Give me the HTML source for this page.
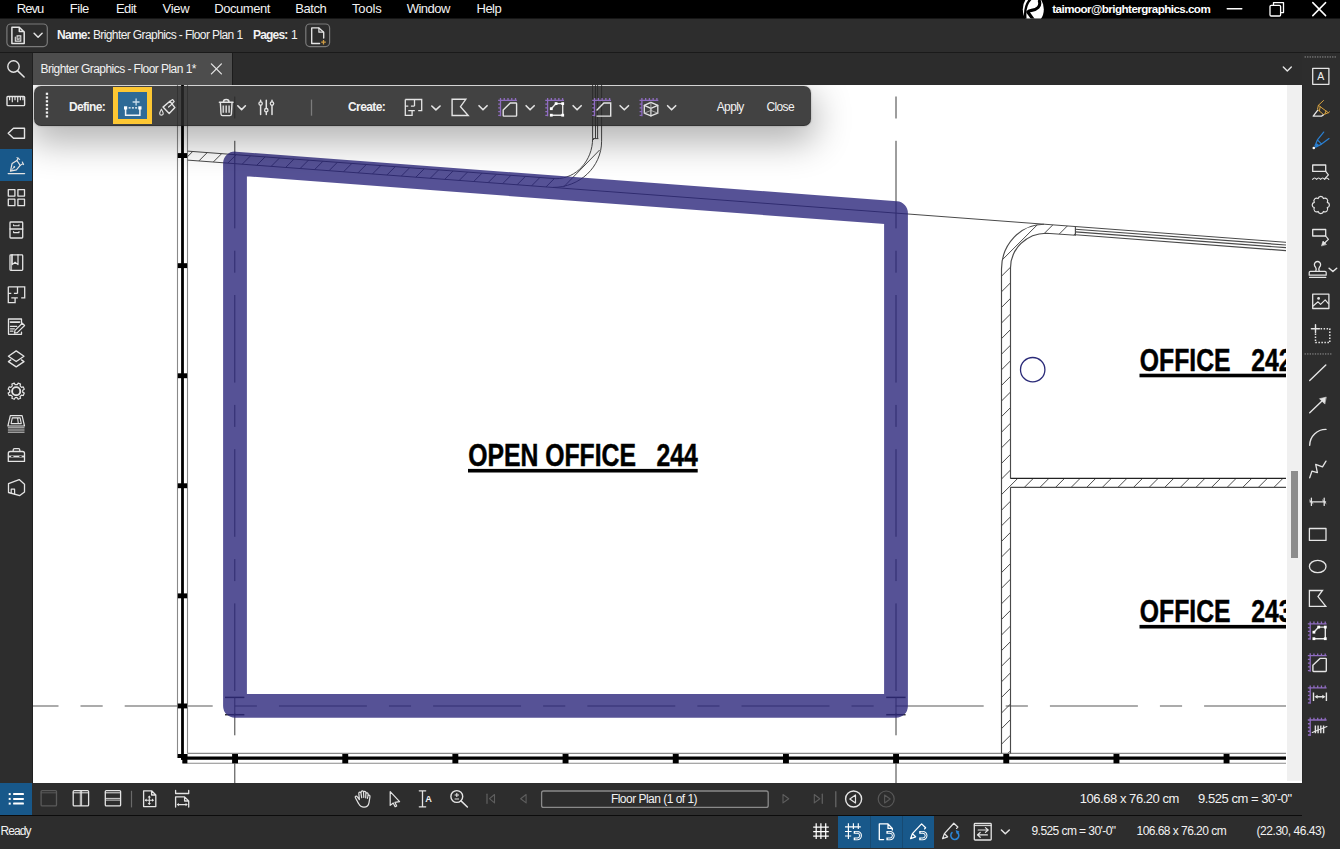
<!DOCTYPE html>
<html lang="en">
<head>
<meta charset="utf-8">
<title>Bluebeam Revu - Brighter Graphics - Floor Plan 1</title>
<style>
html,body{margin:0;padding:0;background:#2d2d2d;}
body{width:1340px;height:849px;overflow:hidden;font-family:"Liberation Sans","DejaVu Sans",sans-serif;}
#app{position:relative;width:1340px;height:849px;overflow:hidden;background:#2d2d2d;}
.abs{position:absolute;}
.t{position:absolute;white-space:pre;margin:0;padding:0;}
#menubar{left:0;top:0;width:1340px;height:18px;background:#000;}
#namebar{left:0;top:18px;width:1340px;height:34px;background:#2d2d2d;}
#nameline{left:0;top:52px;width:1340px;height:1px;background:#1a1a1a;}
#menuedge{left:0;top:18px;width:1340px;height:1px;background:#161616;}
#tabbar{left:33px;top:53px;width:1269px;height:32px;background:#2c2c2c;}
#tab{left:33px;top:53px;width:199px;height:32px;background:#4d4d4d;border-right:1px solid #1c1c1c;}
#leftbar{left:0;top:53px;width:33px;height:730px;background:#2d2d2d;}
#rightbar{left:1302px;top:53px;width:38px;height:763px;background:#2d2d2d;}
#canvas{left:33px;top:85px;width:1269px;height:698px;background:#fff;overflow:hidden;}
#vscroll{left:1287px;top:85px;width:15px;height:696px;background:#f0f0f0;}
#vthumb{left:1291px;top:471px;width:7px;height:87px;background:#8c8c8c;}
#bottombar{left:0;top:783px;width:1302px;height:32px;background:#2d2d2d;}
#bottomline{left:0;top:815px;width:1302px;height:1px;background:#0c0c0c;}
#statusbar{left:0;top:816px;width:1340px;height:33px;background:#2d2d2d;}
#floatbar{left:1px;top:1px;width:777px;height:40px;border-radius:7px;background:rgba(39,39,39,0.875);box-shadow:0 12px 36px 4px rgba(0,0,0,0.31), 0 0 2px 0 rgba(0,0,0,0.3), inset 0 -1px 0 rgba(0,0,0,0.22);}
#leftedge{left:32px;top:53px;width:1px;height:730px;background:#202020;}
#rightedge{left:1302px;top:85px;width:1px;height:698px;background:#272727;}
#leftactive{left:0;top:149px;width:32px;height:32.4px;background:#18588a;}
#listactive{left:0;top:783px;width:32.4px;height:32px;background:#18588a;}
#snapactive{left:837.8px;top:816px;width:96.2px;height:32px;background:#18588a;}
.snapsep{top:816px;width:1px;height:32px;background:#174a72;}
#hilite{left:112.9px;top:87.1px;width:29px;height:27.4px;border:5.2px solid #fdc733;background:#2e6a96;}
svg{position:absolute;overflow:visible;}
</style>
</head>

<body>
<div id="app">
<!-- drawing canvas -->
<div class="abs" id="canvas">
<svg width="1253" height="698" viewBox="33 85 1253 698" style="left:0;top:0;overflow:hidden">
<defs>
<clipPath id="clipBand"><path d="M187.5,151.1 L556,178.7 C576.2,178.7 592.6,160.7 592.6,138.6 L601.6,138.6 L601.6,141.2 C601.6,166.9 579.8,187.4 553,187.4 L187.5,160.1 Z"/></clipPath>
<clipPath id="clipWall"><path d="M1001.5,753.4 L1001.5,269 C1001.5,244.4 1020.5,224.2 1044,224.2 L1075.4,226.5 L1075.4,235.2 L1046.2,233.2 C1026.7,233.2 1010.5,248.9 1010.5,268 L1010.5,478.4 L1286,478.4 L1286,487.3 L1010.5,487.3 L1010.5,753.4 Z"/></clipPath>
</defs>
<line x1="-29.5" y1="706.1" x2="1286" y2="706.1" stroke="#909090" stroke-width="1.5" stroke-dasharray="88 22 22.2 22"/>
<line x1="234.8" y1="-13.4" x2="234.8" y2="783" stroke="#3c3c3c" stroke-width="1" stroke-dasharray="87.6 22.3 22 22.3"/>
<line x1="896.0" y1="-13.4" x2="896.0" y2="783" stroke="#3c3c3c" stroke-width="1" stroke-dasharray="87.6 22.3 22 22.3"/>
<line x1="225.0" y1="697.4" x2="244.4" y2="697.4" stroke="#333" stroke-width="1.5"/>
<line x1="225.0" y1="714.7" x2="244.4" y2="714.7" stroke="#333" stroke-width="1.5"/>
<line x1="234.8" y1="697.4" x2="234.8" y2="714.7" stroke="#4a4a4a" stroke-width="1"/>
<line x1="886.2" y1="697.4" x2="905.6" y2="697.4" stroke="#333" stroke-width="1.5"/>
<line x1="886.2" y1="714.7" x2="905.6" y2="714.7" stroke="#333" stroke-width="1.5"/>
<line x1="896.0" y1="697.4" x2="896.0" y2="714.7" stroke="#4a4a4a" stroke-width="1"/>
<path d="M177.5,85 V758 M187.5,85 V753.4" stroke="#8a8a8a" stroke-width="1.1" fill="none"/>
<line x1="182.5" y1="85" x2="182.5" y2="759.8" stroke="#000" stroke-width="2.8"/>
<rect x="177.8" y="153.1" width="9.3" height="4.9" fill="#000"/>
<rect x="177.8" y="263.2" width="9.3" height="4.9" fill="#000"/>
<rect x="177.8" y="373.3" width="9.3" height="4.9" fill="#000"/>
<rect x="177.8" y="483.3" width="9.3" height="4.9" fill="#000"/>
<rect x="177.8" y="593.4" width="9.3" height="4.9" fill="#000"/>
<rect x="177.8" y="703.5" width="9.3" height="4.9" fill="#000"/>
<path d="M187.5,753.4 H1287 M182.5,763.2 H1287" stroke="#8a8a8a" stroke-width="1.1" fill="none"/>
<line x1="181.1" y1="758.2" x2="1287" y2="758.2" stroke="#000" stroke-width="3.2"/>
<rect x="177.8" y="754" width="9.4" height="4" fill="#000"/><rect x="182.3" y="754" width="5.1" height="9.3" fill="#000"/>
<rect x="232.1" y="754" width="5.9" height="9.3" fill="#000"/>
<rect x="342.3" y="754" width="5.9" height="9.3" fill="#000"/>
<rect x="452.4" y="754" width="5.9" height="9.3" fill="#000"/>
<rect x="562.6" y="754" width="5.9" height="9.3" fill="#000"/>
<rect x="672.8" y="754" width="5.9" height="9.3" fill="#000"/>
<rect x="783.0" y="754" width="5.9" height="9.3" fill="#000"/>
<rect x="893.1" y="754" width="5.9" height="9.3" fill="#000"/>
<rect x="1003.3" y="754" width="5.9" height="9.3" fill="#000"/>
<rect x="1113.5" y="754" width="5.9" height="9.3" fill="#000"/>
<rect x="1223.6" y="754" width="5.9" height="9.3" fill="#000"/>
<g stroke="#4a4a4a" stroke-width="1" fill="none">
<path d="M187.5,151.1 L556,178.7 C576.2,178.7 592.6,160.7 592.6,138.6"/>
<path d="M187.5,160.1 L1286,242.3"/>
<path d="M553,187.4 C579.8,187.4 601.6,166.9 601.6,141.2 V85"/>
<path d="M592.6,85 V138.6 H598.4 M595.5,85 V138.6 M597.6,85 V138.6"/>
<g clip-path="url(#clipBand)">
<line x1="214.2" y1="130" x2="144.2" y2="200"/>
<line x1="229.8" y1="130" x2="159.8" y2="200"/>
<line x1="245.3" y1="130" x2="175.3" y2="200"/>
<line x1="260.9" y1="130" x2="190.9" y2="200"/>
<line x1="276.4" y1="130" x2="206.4" y2="200"/>
<line x1="292.0" y1="130" x2="222.0" y2="200"/>
<line x1="307.5" y1="130" x2="237.5" y2="200"/>
<line x1="323.1" y1="130" x2="253.1" y2="200"/>
<line x1="338.6" y1="130" x2="268.6" y2="200"/>
<line x1="354.2" y1="130" x2="284.2" y2="200"/>
<line x1="369.7" y1="130" x2="299.7" y2="200"/>
<line x1="385.3" y1="130" x2="315.3" y2="200"/>
<line x1="400.8" y1="130" x2="330.8" y2="200"/>
<line x1="416.4" y1="130" x2="346.4" y2="200"/>
<line x1="431.9" y1="130" x2="361.9" y2="200"/>
<line x1="447.4" y1="130" x2="377.4" y2="200"/>
<line x1="463.0" y1="130" x2="393.0" y2="200"/>
<line x1="478.5" y1="130" x2="408.5" y2="200"/>
<line x1="494.1" y1="130" x2="424.1" y2="200"/>
<line x1="509.6" y1="130" x2="439.6" y2="200"/>
<line x1="525.2" y1="130" x2="455.2" y2="200"/>
<line x1="540.7" y1="130" x2="470.7" y2="200"/>
<line x1="556.3" y1="130" x2="486.3" y2="200"/>
<line x1="571.8" y1="130" x2="501.8" y2="200"/>
<line x1="587.4" y1="130" x2="517.4" y2="200"/>
<line x1="602.9" y1="130" x2="532.9" y2="200"/>
</g>
<line x1="599.6" y1="150" x2="563.4" y2="187.2"/>
</g>
<g stroke="#4a4a4a" stroke-width="1.15" fill="none">
<g clip-path="url(#clipWall)" stroke-width="1">
<line x1="952.9" y1="200" x2="372.9" y2="780"/>
<line x1="968.5" y1="200" x2="388.5" y2="780"/>
<line x1="984.1" y1="200" x2="404.1" y2="780"/>
<line x1="999.7" y1="200" x2="419.7" y2="780"/>
<line x1="1015.3" y1="200" x2="435.3" y2="780"/>
<line x1="1030.9" y1="200" x2="450.9" y2="780"/>
<line x1="1046.5" y1="200" x2="466.5" y2="780"/>
<line x1="1062.1" y1="200" x2="482.1" y2="780"/>
<line x1="1077.7" y1="200" x2="497.7" y2="780"/>
<line x1="1093.3" y1="200" x2="513.3" y2="780"/>
<line x1="1108.9" y1="200" x2="528.9" y2="780"/>
<line x1="1124.5" y1="200" x2="544.5" y2="780"/>
<line x1="1140.1" y1="200" x2="560.1" y2="780"/>
<line x1="1155.7" y1="200" x2="575.7" y2="780"/>
<line x1="1171.3" y1="200" x2="591.3" y2="780"/>
<line x1="1186.9" y1="200" x2="606.9" y2="780"/>
<line x1="1202.5" y1="200" x2="622.5" y2="780"/>
<line x1="1218.1" y1="200" x2="638.1" y2="780"/>
<line x1="1233.7" y1="200" x2="653.7" y2="780"/>
<line x1="1249.3" y1="200" x2="669.3" y2="780"/>
<line x1="1264.9" y1="200" x2="684.9" y2="780"/>
<line x1="1280.5" y1="200" x2="700.5" y2="780"/>
<line x1="1296.1" y1="200" x2="716.1" y2="780"/>
<line x1="1311.7" y1="200" x2="731.7" y2="780"/>
<line x1="1327.3" y1="200" x2="747.3" y2="780"/>
<line x1="1342.9" y1="200" x2="762.9" y2="780"/>
<line x1="1358.5" y1="200" x2="778.5" y2="780"/>
<line x1="1374.1" y1="200" x2="794.1" y2="780"/>
<line x1="1389.7" y1="200" x2="809.7" y2="780"/>
<line x1="1405.3" y1="200" x2="825.3" y2="780"/>
<line x1="1420.9" y1="200" x2="840.9" y2="780"/>
<line x1="1436.5" y1="200" x2="856.5" y2="780"/>
<line x1="1452.1" y1="200" x2="872.1" y2="780"/>
<line x1="1467.7" y1="200" x2="887.7" y2="780"/>
<line x1="1483.3" y1="200" x2="903.3" y2="780"/>
<line x1="1498.9" y1="200" x2="918.9" y2="780"/>
<line x1="1514.5" y1="200" x2="934.5" y2="780"/>
<line x1="1530.1" y1="200" x2="950.1" y2="780"/>
<line x1="1545.7" y1="200" x2="965.7" y2="780"/>
<line x1="1561.3" y1="200" x2="981.3" y2="780"/>
<line x1="1576.9" y1="200" x2="996.9" y2="780"/>
<line x1="1592.5" y1="200" x2="1012.5" y2="780"/>
<line x1="1608.1" y1="200" x2="1028.1" y2="780"/>
<line x1="1623.7" y1="200" x2="1043.7" y2="780"/>
<line x1="1639.3" y1="200" x2="1059.3" y2="780"/>
<line x1="1654.9" y1="200" x2="1074.9" y2="780"/>
<line x1="1670.5" y1="200" x2="1090.5" y2="780"/>
<line x1="1686.1" y1="200" x2="1106.1" y2="780"/>
<line x1="1701.7" y1="200" x2="1121.7" y2="780"/>
<line x1="1717.3" y1="200" x2="1137.3" y2="780"/>
<line x1="1732.9" y1="200" x2="1152.9" y2="780"/>
<line x1="1748.5" y1="200" x2="1168.5" y2="780"/>
<line x1="1764.1" y1="200" x2="1184.1" y2="780"/>
<line x1="1779.7" y1="200" x2="1199.7" y2="780"/>
<line x1="1795.3" y1="200" x2="1215.3" y2="780"/>
<line x1="1810.9" y1="200" x2="1230.9" y2="780"/>
<line x1="1826.5" y1="200" x2="1246.5" y2="780"/>
<line x1="1842.1" y1="200" x2="1262.1" y2="780"/>
<line x1="1857.7" y1="200" x2="1277.7" y2="780"/>
<line x1="1873.3" y1="200" x2="1293.3" y2="780"/>
<line x1="1888.9" y1="200" x2="1308.9" y2="780"/>
</g>
<path d="M1001.5,753.4 V269 C1001.5,244.4 1020.5,224.2 1044,224.2"/>
<path d="M1010.5,478.4 V268 C1010.5,248.9 1026.7,233.2 1046.2,233.2 L1075.4,235.2 V226.5"/>
<path d="M1010.5,487.3 V753.4"/>
<line x1="1075.4" y1="229.2" x2="1286" y2="245.0"/>
<line x1="1075.4" y1="231.9" x2="1286" y2="247.7"/>
<line x1="1075.4" y1="234.8" x2="1286" y2="250.6"/>
<line x1="1010.5" y1="487.3" x2="1286" y2="487.3"/>
<line x1="1010.4" y1="478.4" x2="1286" y2="478.4" stroke="#222" stroke-width="1.4"/>
</g>
<circle cx="1032.7" cy="369.7" r="12.2" fill="none" stroke="#2a2a78" stroke-width="1.3"/>
<text transform="translate(468.2,466.2) scale(0.771,1)" font-family="Liberation Sans, sans-serif" font-weight="700" font-size="32.1" fill="#000" stroke="#000" stroke-width="0.5" xml:space="preserve">OPEN OFFICE   244</text>
<rect x="468.0" y="468.9" width="229.7" height="3.6" fill="#000"/>
<text transform="translate(1139.8,371.0) scale(0.771,1)" font-family="Liberation Sans, sans-serif" font-weight="700" font-size="32.1" fill="#000" stroke="#000" stroke-width="0.5" xml:space="preserve">OFFICE   242</text>
<rect x="1139.5" y="373.7" width="150.5" height="3.6" fill="#000"/>
<text transform="translate(1139.8,622.2) scale(0.771,1)" font-family="Liberation Sans, sans-serif" font-weight="700" font-size="32.1" fill="#000" stroke="#000" stroke-width="0.5" xml:space="preserve">OFFICE   243</text>
<rect x="1139.5" y="624.9" width="150.5" height="3.6" fill="#000"/>
<path d="M235,163.5 L896,213 L896,705.9 L235,705.9 Z" fill="none" stroke="#28247a" stroke-opacity="0.79" stroke-width="23.8" stroke-linejoin="round"/>
</svg>
<div class="abs" id="floatbar"></div>
</div>

<!-- application chrome -->
<div class="abs" id="menubar"></div>
<div class="abs" id="namebar"></div>
<div class="abs" id="nameline"></div>
<div class="abs" id="menuedge"></div>
<div class="abs" id="tabbar"></div>
<div class="abs" id="tab"></div>
<div class="abs" id="leftbar"></div>
<div class="abs" id="leftactive"></div>
<div class="abs" id="leftedge"></div>
<div class="abs" id="rightbar"></div>
<div class="abs" id="rightedge"></div>
<div class="abs" id="vscroll"></div>
<div class="abs" id="vthumb"></div>
<div class="abs" id="bottombar"></div>
<div class="abs" id="listactive"></div>
<div class="abs" id="bottomline"></div>
<div class="abs" id="statusbar"></div>
<div class="abs" id="snapactive"></div>
<div class="abs snapsep" style="left:870px"></div>
<div class="abs snapsep" style="left:902px"></div>
<div class="abs" id="hilite"></div>

<!-- icon overlay -->
<svg id="icons" style="left:0;top:0" width="1340" height="849" viewBox="0 0 1340 849" fill="none" stroke-linecap="round" stroke-linejoin="round">
<g><clipPath id="cl"><rect x="1015" y="0" width="40" height="18.5"/></clipPath>
<g clip-path="url(#cl)"><ellipse cx="1033.3" cy="9.2" rx="10.5" ry="14" fill="#fff"/>
<path d="M1031.2,-1.5 C1026.3,3 1024.2,10 1025.6,20" stroke="#000" stroke-width="2.4"/>
<path d="M1039.4,1.2 C1041,6.6 1037,9.6 1031.6,10.4 C1029.4,10.7 1028.2,11.2 1027.8,12 L1033.6,20" stroke="#000" stroke-width="3.1"/>
</g></g>
<path d="M1227.2,8.7 H1241.8" stroke="#fff" stroke-width="1.4"/>
<path d="M1273.5,5.2 V2.6 H1283.5 V12.6 H1280.8" stroke="#fff" stroke-width="1.3"/><rect x="1270" y="5.4" width="10.6" height="10.6" rx="1.2" stroke="#fff" stroke-width="1.3"/>
<path d="M1312.8,2.6 L1325.6,15.6 M1325.6,2.6 L1312.8,15.6" stroke="#fff" stroke-width="1.5"/>
<rect x="6.9" y="24" width="40.4" height="22.6" rx="4" stroke="#7a7a7a" stroke-width="1.2"/>
<path d="M19.3,27.2 H11.9 V43.5 H24.2 V32 Z M19.3,27.4 V31.6 H24" stroke="#e4e4e4" stroke-width="1.5"/>
<path d="M15.3,37 V41.1 H20.8 V35.9 H17.1 V39.3 H19.1 V37.8" stroke="#e4e4e4" stroke-width="1.1" stroke-linejoin="miter"/>
<path d="M34.1,33.3 L38.1,37.2 L42.1,33.3" stroke="#e4e4e4" stroke-width="1.5"/>
<rect x="305.8" y="24" width="23.8" height="22.6" rx="4" stroke="#7a7a7a" stroke-width="1.2"/>
<path d="M319.6,43.5 H311.7 V27.9 H318.9 L323.7,32.2 V38" stroke="#e4e4e4" stroke-width="1.35"/><path d="M318.9,28.2 V32.2 H323.4" stroke="#e4e4e4" stroke-width="1.2"/>
<path d="M321.2,42.2 H325.8 M323.5,39.9 V44.5" stroke="#d29f45" stroke-width="1.3" stroke-linecap="butt"/>
<path d="M211.4,63.9 L221.4,73.9 M221.4,63.9 L211.4,73.9" stroke="#e4e4e4" stroke-width="1.3"/>
<path d="M1283.3,66.9 L1287.3,70.9 L1291.3,66.9" stroke="#e4e4e4" stroke-width="1.4"/>
<circle cx="13.5" cy="66.5" r="5.7" stroke="#e4e4e4" stroke-width="1.4"/><path d="M17.7,70.9 L24.1,77" stroke="#e4e4e4" stroke-width="1.5"/>
<rect x="7" y="96.5" width="17.6" height="9.1" rx="0.8" stroke="#e4e4e4" stroke-width="1.4"/>
<path d="M9.6,97 V100.3 M12.3,97 V102.3 M15,97 V100.3 M17.7,97 V102.3 M20.4,97 V100.3 M23,97 V100.3" stroke="#e4e4e4" stroke-width="1.2" stroke-linecap="butt"/>
<path d="M8.2,133.2 L13.5,128.2 H24.5 V138.2 H13.5 Z" stroke="#e4e4e4" stroke-width="1.4"/>
<path d="M10.5,171.2 L12.1,163.4 L16.9,160.5 L20.2,165.4 L16.4,169.9 Z" stroke="#e4e4e4" stroke-width="1.2"/>
<path d="M10.7,171 L14,167.3" stroke="#e4e4e4" stroke-width="1"/><circle cx="14.3" cy="166.9" r="0.9" fill="#e4e4e4"/>
<path d="M16.9,160.5 L18.2,158 M20.2,165.4 L22.9,163.8 M17,157.6 L19.6,159.4 M22.3,162 L23.6,164.6" stroke="#e4e4e4" stroke-width="1.1"/>
<path d="M8.2,173.6 H24.6" stroke="#e4e4e4" stroke-width="1.3"/>
<rect x="8.3" y="189.6" width="6.6" height="6.5" stroke="#e4e4e4" stroke-width="1.3"/>
<rect x="17.9" y="189.6" width="6.6" height="6.5" stroke="#e4e4e4" stroke-width="1.3"/>
<rect x="8.3" y="199.2" width="6.6" height="6.5" stroke="#e4e4e4" stroke-width="1.3"/>
<rect x="17.9" y="199.2" width="6.6" height="6.5" stroke="#e4e4e4" stroke-width="1.3"/>
<rect x="10" y="222" width="12.7" height="16" rx="0.8" stroke="#e4e4e4" stroke-width="1.3"/><path d="M10,229 H22.7" stroke="#e4e4e4" stroke-width="1.3"/>
<path d="M13.6,224.8 V225.8 H19 V224.8 M13.6,231.6 V232.6 H19 V231.6" stroke="#e4e4e4" stroke-width="1.1"/>
<rect x="10" y="254.9" width="12.7" height="15.5" rx="0.8" stroke="#e4e4e4" stroke-width="1.3"/>
<path d="M12.2,254.6 V264.6 L15.1,262.3 L18,264.6 V254.6" stroke="#e4e4e4" stroke-width="1.2"/><path d="M11.6,255 V270" stroke="#e4e4e4" stroke-width="0.8"/>
<path d="M8.3,286.8 H24.7 V297.90000000000003 H21.200000000000003 M8.3,286.8 V302.6 H15.100000000000001 V297.90000000000003 M11.3,297.90000000000003 H17.8 M17.5,286.8 V293.40000000000003 M8.3,293.40000000000003 H11.3 M13.9,293.40000000000003 H17.5" stroke="#e4e4e4" stroke-width="1.3" stroke-linecap="butt" stroke-linejoin="miter"/>
<path d="M21.5,323.6 V319 H8.5 V334.3 H21.5 V332.2" stroke="#e4e4e4" stroke-width="1.3"/>
<path d="M10.4,322.1 H19.6" stroke="#e4e4e4" stroke-width="1.6"/><path d="M10.4,326.3 H16.8 M10.4,328.8 H14.4 M10.4,331.2 H13" stroke="#e4e4e4" stroke-width="1.2"/>
<path d="M22.3,323.2 L24.6,325.5 L17.3,332.6 L14.4,333.2 L15,330.4 Z" stroke="#e4e4e4" stroke-width="1.2"/>
<path d="M16.2,350.9 L24,356.2 L16.2,361.5 L8.4,356.2 Z" stroke="#e4e4e4" stroke-width="1.3"/><path d="M10.9,359.9 L8.4,361.6 L16.2,366.9 L24,361.6 L21.5,359.9" stroke="#e4e4e4" stroke-width="1.3"/>
<path d="M24.27,393.14 L23.28,395.54 L21.54,395.08 L20.08,396.54 L20.54,398.28 L18.14,399.27 L17.23,397.72 L15.17,397.72 L14.26,399.27 L11.86,398.28 L12.32,396.54 L10.86,395.08 L9.12,395.54 L8.13,393.14 L9.68,392.23 L9.68,390.17 L8.13,389.26 L9.12,386.86 L10.86,387.32 L12.32,385.86 L11.86,384.12 L14.26,383.13 L15.17,384.68 L17.23,384.68 L18.14,383.13 L20.54,384.12 L20.08,385.86 L21.54,387.32 L23.28,386.86 L24.27,389.26 L22.72,390.17 L22.72,392.23 Z" stroke="#e4e4e4" stroke-width="1.2"/>
<circle cx="16.2" cy="391.2" r="4.1" stroke="#e4e4e4" stroke-width="1.9"/>
<path d="M10.3,415.6 H22.1 L24.5,426 H7.9 Z" stroke="#e4e4e4" stroke-width="1.2"/><path d="M12.3,417.9 H20.1 L21.3,423.6 H11.1 Z M17.6,418 L18.3,423.4" stroke="#e4e4e4" stroke-width="1.1"/>
<path d="M7.9,427.8 H24.5 M7.9,430 H24.5 M7.9,432.2 H24.5" stroke="#e4e4e4" stroke-width="0.9" stroke-linecap="butt"/>
<path d="M8.3,461.4 V453.4 Q8.3,451.5 10.2,451.5 H22.6 Q24.5,451.5 24.5,453.4 V461.4 Z" stroke="#e4e4e4" stroke-width="1.3"/>
<path d="M13.2,451.3 V449.9 Q13.2,448.6 14.5,448.6 H18.5 Q19.8,448.6 19.8,449.9 V451.3" stroke="#e4e4e4" stroke-width="1.3"/>
<path d="M8.4,456.5 H24.4" stroke="#e4e4e4" stroke-width="1.9" stroke-linecap="butt"/><path d="M11.6,456.5 H13 M19.8,456.5 H21.2" stroke="#2d2d2d" stroke-width="1.2"/>
<path d="M8.5,483.6 L19.2,479.6 L24.5,484.2 V491.9 L19.8,495.6 L8.5,492.5 Z" stroke="#e4e4e4" stroke-width="1.3"/><path d="M11.2,493 V489.2 H14.6 V493.8" stroke="#e4e4e4" stroke-width="1.2"/>
<rect x="45.8" y="92.70" width="2.3" height="2.2" fill="#f0f0f0"/>
<rect x="45.8" y="96.46" width="2.3" height="2.2" fill="#f0f0f0"/>
<rect x="45.8" y="100.22" width="2.3" height="2.2" fill="#f0f0f0"/>
<rect x="45.8" y="103.98" width="2.3" height="2.2" fill="#f0f0f0"/>
<rect x="45.8" y="107.74" width="2.3" height="2.2" fill="#f0f0f0"/>
<rect x="45.8" y="111.50" width="2.3" height="2.2" fill="#f0f0f0"/>
<rect x="45.8" y="115.26" width="2.3" height="2.2" fill="#f0f0f0"/>
<path d="M125.6,108 V115.2 H139.9 V108" stroke="#eef3f8" stroke-width="1.5" stroke-linejoin="miter"/>
<rect x="124" y="106.3" width="3.2" height="3.2" fill="#fff"/><rect x="138.3" y="106.3" width="3.2" height="3.2" fill="#fff"/>
<path d="M128.6,107.9 H130.6 M131.9,107.9 H133.9 M135.1,107.9 H137.1" stroke="#fff" stroke-width="1.2" stroke-linecap="butt"/>
<path d="M133.1,102 H139.1 M136.1,99 V105" stroke="#c7dcec" stroke-width="1.3"/>
<path d="M169.9,101.3 L174.9,107.6 L169.2,113.5 L163,107.1 Z" stroke="#e4e4e4" stroke-width="1.4"/>
<path d="M170.4,101 L172.7,99.6 L174.2,101.5 L172.3,103.4 M172.6,103.6 L168.6,107" stroke="#e4e4e4" stroke-width="1.2"/>
<path d="M161.4,109.2 C160.4,111 159.7,112.2 159.7,113.4 A1.75,1.75 0 0 0 163.2,113.4 C163.2,112.2 162.4,111 161.4,109.2 Z" stroke="#e4e4e4" stroke-width="1.1"/>
<path d="M219.4,102.3 H233 M223.4,102 Q223.4,99.5 226.2,99.5 Q229,99.5 229,102" stroke="#e4e4e4" stroke-width="1.5"/>
<path d="M220.4,103 L221,114 Q221.1,115.6 222.6,115.6 H229.8 Q231.3,115.6 231.4,114 L232,103" stroke="#e4e4e4" stroke-width="1.4"/>
<path d="M223.3,105.4 V112.8 M226.2,105.4 V112.8 M229.1,105.4 V112.8" stroke="#cfcfcf" stroke-width="1.6" stroke-linecap="butt"/>
<path d="M237.8,105.8 L241.6,109.6 L245.4,105.8" stroke="#e4e4e4" stroke-width="1.6"/>
<path d="M260.6,100.2 V101.6 M260.6,105.6 V114.6 M266.3,100.2 V108.2 M266.3,112.2 V114.6 M272,100.2 V101.6 M272,105.6 V114.6" stroke="#e4e4e4" stroke-width="1.5"/>
<circle cx="260.6" cy="103.6" r="1.7" stroke="#e4e4e4" stroke-width="1.3"/>
<circle cx="266.3" cy="110.2" r="1.7" stroke="#e4e4e4" stroke-width="1.3"/>
<circle cx="272" cy="103.6" r="1.7" stroke="#e4e4e4" stroke-width="1.3"/>
<path d="M311.5,99.6 V115.7" stroke="#7c7c7c" stroke-width="1.3" stroke-linecap="butt"/>
<path d="M405.3,99.5 H421.7 V110.6 H418.2 M405.3,99.5 V115.3 H412.1 V110.6 M408.3,110.6 H414.8 M414.5,99.5 V106.1 M405.3,106.1 H408.3 M410.90000000000003,106.1 H414.5" stroke="#e4e4e4" stroke-width="1.3" stroke-linecap="butt" stroke-linejoin="miter"/>
<path d="M431.8,106 L435.9,109.9 L440.1,106" stroke="#e4e4e4" stroke-width="1.6"/>
<path d="M452.1,99.3 H465.8 L460.5,106.6 L468.2,115.5 H452.1 Z" stroke="#e4e4e4" stroke-width="1.4" stroke-linejoin="miter"/>
<path d="M479,105.7 L483,109.8 L487.1,105.7" stroke="#e4e4e4" stroke-width="1.6"/>
<path d="M498.1,100.3 H516.9 M500.5,97.89999999999999 V116.3 M504.25,98.0 V100.3 M498.2,104.05 H500.5 M508.00,98.0 V100.3 M498.2,107.80 H500.5 M511.75,98.0 V100.3 M498.2,111.55 H500.5 M515.50,98.0 V100.3 M498.2,115.30 H500.5" stroke="#8f6cc0" stroke-width="1.3" stroke-linecap="butt"/>
<path d="M510.3,103.0 H515.9 Q516.6,103.0 516.6,103.7 V115.39999999999999 Q516.6,116.1 515.9,116.1 H503.9 Q503.2,116.1 503.2,115.39999999999999 V109.89999999999999 Z" stroke="#e4e4e4" stroke-width="1.4"/>
<path d="M526.1,105.7 L530.1,109.8 L534.2,105.7" stroke="#e4e4e4" stroke-width="1.6"/>
<path d="M545.2,100.3 H564.0 M547.6,97.89999999999999 V116.3 M551.35,98.0 V100.3 M545.3000000000001,104.05 H547.6 M555.10,98.0 V100.3 M545.3000000000001,107.80 H547.6 M558.85,98.0 V100.3 M545.3000000000001,111.55 H547.6 M562.60,98.0 V100.3 M545.3000000000001,115.30 H547.6" stroke="#8f6cc0" stroke-width="1.3" stroke-linecap="butt"/>
<path d="M551.3000000000001,108.7 L556.1,103.6 H562.7 V115.2 H551.3000000000001" stroke="#e4e4e4" stroke-width="1.4"/>
<rect x="549.9" y="107.3" width="2.8" height="2.8" fill="#fff"/>
<rect x="554.7" y="102.2" width="2.8" height="2.8" fill="#fff"/>
<rect x="561.3" y="102.2" width="2.8" height="2.8" fill="#fff"/>
<rect x="561.3" y="113.8" width="2.8" height="2.8" fill="#fff"/>
<rect x="549.9" y="113.8" width="2.8" height="2.8" fill="#fff"/>
<path d="M573.1,105.7 L577.1,109.8 L581.2,105.7" stroke="#e4e4e4" stroke-width="1.6"/>
<path d="M592.2,100.3 H611.0 M594.6,97.89999999999999 V116.3 M598.35,98.0 V100.3 M592.3000000000001,104.05 H594.6 M602.10,98.0 V100.3 M592.3000000000001,107.80 H594.6 M605.85,98.0 V100.3 M592.3000000000001,111.55 H594.6 M609.60,98.0 V100.3 M592.3000000000001,115.30 H594.6" stroke="#8f6cc0" stroke-width="1.3" stroke-linecap="butt"/>
<path d="M597.0,109.89999999999999 L603.9,103.0 H610.7 V116.1 H597.0" stroke="#e4e4e4" stroke-width="1.4" stroke-linejoin="miter"/>
<path d="M620.1,105.7 L624.3,109.8 L628.5,105.7" stroke="#e4e4e4" stroke-width="1.6"/>
<path d="M639.5,100.3 H658.3 M641.9,97.89999999999999 V116.3 M645.65,98.0 V100.3 M639.6,104.05 H641.9 M649.40,98.0 V100.3 M639.6,107.80 H641.9 M653.15,98.0 V100.3 M639.6,111.55 H641.9 M656.90,98.0 V100.3 M639.6,115.30 H641.9" stroke="#8f6cc0" stroke-width="1.3" stroke-linecap="butt"/>
<path d="M650.9,102.39999999999999 L657.8,105.39999999999999 V113.19999999999999 L650.9,115.89999999999999 L644.3,113.19999999999999 V105.39999999999999 Z" stroke="#e4e4e4" stroke-width="1.3"/>
<path d="M644.3,105.39999999999999 L650.9,108.39999999999999 L657.8,105.39999999999999 M650.9,108.39999999999999 V115.89999999999999" stroke="#e4e4e4" stroke-width="1.2"/>
<path d="M644.3,113.19999999999999 L650.9,110.39999999999999 L657.8,113.19999999999999 M650.9,110.39999999999999 V102.39999999999999" stroke="#bdbdbd" stroke-width="0.8"/>
<path d="M667.6,105.7 L671.6,109.8 L675.7,105.7" stroke="#e4e4e4" stroke-width="1.6"/>
<rect x="1304.60" y="56.3" width="1.3" height="1.3" fill="#808080"/>
<rect x="1307.10" y="56.3" width="1.3" height="1.3" fill="#808080"/>
<rect x="1309.60" y="56.3" width="1.3" height="1.3" fill="#808080"/>
<rect x="1312.10" y="56.3" width="1.3" height="1.3" fill="#808080"/>
<rect x="1314.60" y="56.3" width="1.3" height="1.3" fill="#808080"/>
<rect x="1317.10" y="56.3" width="1.3" height="1.3" fill="#808080"/>
<rect x="1319.60" y="56.3" width="1.3" height="1.3" fill="#808080"/>
<rect x="1322.10" y="56.3" width="1.3" height="1.3" fill="#808080"/>
<rect x="1324.60" y="56.3" width="1.3" height="1.3" fill="#808080"/>
<rect x="1327.10" y="56.3" width="1.3" height="1.3" fill="#808080"/>
<rect x="1329.60" y="56.3" width="1.3" height="1.3" fill="#808080"/>
<rect x="1332.10" y="56.3" width="1.3" height="1.3" fill="#808080"/>
<rect x="1334.60" y="56.3" width="1.3" height="1.3" fill="#808080"/>
<rect x="1312.7" y="68.3" width="16.2" height="16" stroke="#e4e4e4" stroke-width="1.3"/>
<path d="M1323.5,100.5 L1318.4,105.3 L1328.3,112.7 M1318.4,105.3 L1317.5,109.3 L1323.6,114.7 L1328.3,112.7 L1329.5,111.8 M1320.2,106.7 L1319.4,110.9 M1326,111 L1324.9,113.9" stroke="#d9a441" stroke-width="1"/>
<path d="M1317.6,110.4 L1313.2,116.2 H1321.4 L1323.3,114.9" stroke="#e4e4e4" stroke-width="1.3"/>
<path d="M1323.7,132.1 L1317.4,139.9 L1321.6,144.1 L1329,138.6 M1317.4,139.9 L1314.9,146 M1321.6,144.1 L1315.6,147.2" stroke="#2a7fd0" stroke-width="1.25"/>
<path d="M1316.5,143 L1319.7,145.5 L1314.6,147.5 Z" fill="#2a7fd0" stroke="none"/>
<circle cx="1313.8" cy="148" r="1.3" fill="#fff"/>
<rect x="1312.7" y="165" width="13" height="6.4" stroke="#e4e4e4" stroke-width="1.3"/>
<path d="M1325.7,171.4 L1328.4,174.8 L1324.9,178.6" stroke="#e4e4e4" stroke-width="1.2"/>
<path d="M1312.6,179.4 Q1314.6,176.6 1316.6,179.4 Q1318.6,176.6 1320.6,179.4 Q1322.6,176.6 1324.6,179.4 Q1326.6,176.6 1328.8,179.4" stroke="#e4e4e4" stroke-width="1.1"/>
<path d="M1318.12,198.53 A2.75,2.75 0 0 1 1323.48,198.53 A2.75,2.75 0 0 1 1327.27,202.32 A2.75,2.75 0 0 1 1327.27,207.68 A2.75,2.75 0 0 1 1323.48,211.47 A2.75,2.75 0 0 1 1318.12,211.47 A2.75,2.75 0 0 1 1314.33,207.68 A2.75,2.75 0 0 1 1314.33,202.32 A2.75,2.75 0 0 1 1318.12,198.53 Z" stroke="#e4e4e4" stroke-width="1.2"/>
<rect x="1312.7" y="229.5" width="13" height="6.5" stroke="#e4e4e4" stroke-width="1.3"/>
<path d="M1325.7,236 L1328.4,239.4 L1324.6,243" stroke="#e4e4e4" stroke-width="1.2"/><path d="M1321.6,245.6 L1323,241 L1326.2,244.2 Z" fill="#e4e4e4" stroke="#e4e4e4" stroke-width="0.6"/>
<path d="M1315.8,271.3 C1316.6,269.5 1316.3,268.2 1315.4,266.9 A3.1,3.1 0 1 1 1319.6,266.9 C1318.7,268.2 1318.4,269.5 1319.2,271.3" stroke="#e4e4e4" stroke-width="1.3"/>
<path d="M1309.2,275.2 V272.6 Q1309.2,271.4 1310.4,271.4 H1325 Q1326.2,271.4 1326.2,272.6 V275.2 Z M1309.6,277.4 H1325.8" stroke="#e4e4e4" stroke-width="1.2"/>
<path d="M1329.1,268.2 L1332.9,271.5 L1336.7,268.2" stroke="#e4e4e4" stroke-width="1.5"/>
<rect x="1312.7" y="294.2" width="16.2" height="14.3" stroke="#e4e4e4" stroke-width="1.3"/><circle cx="1318.6" cy="298.4" r="1.4" fill="#e4e4e4"/>
<path d="M1313.4,305.8 L1318,301.8 L1320.6,304.4 L1325.2,299.9 L1328.4,303.6" stroke="#e4e4e4" stroke-width="1.2"/>
<path d="M1320.6,328.7 H1329.8 V342.6 H1315.5 V333.6" stroke="#e4e4e4" stroke-width="1.5" stroke-dasharray="1.5 1.5" stroke-linecap="butt"/>
<path d="M1311.4,328.7 H1319.4 M1315.5,324.6 V332.6" stroke="#e4e4e4" stroke-width="1.4"/>
<rect x="1304.60" y="353.3" width="1.3" height="1.3" fill="#808080"/>
<rect x="1307.15" y="353.3" width="1.3" height="1.3" fill="#808080"/>
<rect x="1309.70" y="353.3" width="1.3" height="1.3" fill="#808080"/>
<rect x="1312.25" y="353.3" width="1.3" height="1.3" fill="#808080"/>
<rect x="1314.80" y="353.3" width="1.3" height="1.3" fill="#808080"/>
<rect x="1317.35" y="353.3" width="1.3" height="1.3" fill="#808080"/>
<rect x="1319.90" y="353.3" width="1.3" height="1.3" fill="#808080"/>
<rect x="1322.45" y="353.3" width="1.3" height="1.3" fill="#808080"/>
<rect x="1325.00" y="353.3" width="1.3" height="1.3" fill="#808080"/>
<rect x="1327.55" y="353.3" width="1.3" height="1.3" fill="#808080"/>
<rect x="1330.10" y="353.3" width="1.3" height="1.3" fill="#808080"/>
<path d="M1309.7,380.6 L1325.8,365" stroke="#e4e4e4" stroke-width="1.4"/>
<path d="M1309.7,412.7 L1322,400.9" stroke="#e4e4e4" stroke-width="1.4"/><path d="M1325.9,397.2 L1319.5,398.7 L1324.6,403.8 Z" fill="#e4e4e4" stroke="#e4e4e4" stroke-width="0.6"/>
<path d="M1309.7,445.3 A16.2,16 0 0 1 1326,429.4" stroke="#e4e4e4" stroke-width="1.4"/>
<path d="M1309.7,477.8 L1311.9,471.2 L1317.4,472.7 L1315.7,464.4 L1322.5,466.9 L1326,461.1" stroke="#e4e4e4" stroke-width="1.3"/>
<path d="M1310,501.8 H1325.6 M1311.4,498.2 V505.4 M1324.2,498.2 V505.4" stroke="#e4e4e4" stroke-width="1.3"/><path d="M1309.6,500.2 L1313,503.4 M1322.6,500.2 L1326,503.4" stroke="#e4e4e4" stroke-width="1"/>
<rect x="1309.4" y="528.5" width="16.6" height="11.9" stroke="#e4e4e4" stroke-width="1.3"/>
<ellipse cx="1317.7" cy="566.5" rx="8.3" ry="6.2" stroke="#e4e4e4" stroke-width="1.3"/>
<path d="M1309.4,590.5 H1322.5 L1318,596.6 L1325.8,606.3 H1309.4 Z" stroke="#e4e4e4" stroke-width="1.3" stroke-linejoin="miter"/>
<path d="M1307.8,623.8 H1326.6000000000001 M1310.2,621.4 V639.8 M1313.95,621.5 V623.8 M1307.9,627.55 H1310.2 M1317.70,621.5 V623.8 M1307.9,631.30 H1310.2 M1321.45,621.5 V623.8 M1307.9,635.05 H1310.2 M1325.20,621.5 V623.8 M1307.9,638.80 H1310.2" stroke="#8f6cc0" stroke-width="1.3" stroke-linecap="butt"/>
<path d="M1313.9,632.1999999999999 L1318.7,627.0999999999999 H1325.3 V638.6999999999999 H1313.9" stroke="#e4e4e4" stroke-width="1.4"/>
<rect x="1312.5" y="630.8" width="2.8" height="2.8" fill="#fff"/>
<rect x="1317.3" y="625.7" width="2.8" height="2.8" fill="#fff"/>
<rect x="1323.9" y="625.7" width="2.8" height="2.8" fill="#fff"/>
<rect x="1323.9" y="637.3" width="2.8" height="2.8" fill="#fff"/>
<rect x="1312.5" y="637.3" width="2.8" height="2.8" fill="#fff"/>
<path d="M1307.8,655.7 H1326.6000000000001 M1310.2,653.3000000000001 V671.7 M1313.95,653.4000000000001 V655.7 M1307.9,659.45 H1310.2 M1317.70,653.4000000000001 V655.7 M1307.9,663.20 H1310.2 M1321.45,653.4000000000001 V655.7 M1307.9,666.95 H1310.2 M1325.20,653.4000000000001 V655.7 M1307.9,670.70 H1310.2" stroke="#8f6cc0" stroke-width="1.3" stroke-linecap="butt"/>
<path d="M1320.0,658.4000000000001 H1325.6000000000001 Q1326.3,658.4000000000001 1326.3,659.1 V670.8000000000001 Q1326.3,671.5 1325.6000000000001,671.5 H1313.6000000000001 Q1312.9,671.5 1312.9,670.8000000000001 V665.3000000000001 Z" stroke="#e4e4e4" stroke-width="1.4"/>
<path d="M1307.8,687.8 H1326.6000000000001 M1310.2,685.4 V703.8 M1313.95,685.5 V687.8 M1307.9,691.55 H1310.2 M1317.70,685.5 V687.8 M1307.9,695.30 H1310.2 M1321.45,685.5 V687.8 M1307.9,699.05 H1310.2 M1325.20,685.5 V687.8 M1307.9,702.80 H1310.2" stroke="#8f6cc0" stroke-width="1.3" stroke-linecap="butt"/>
<path d="M1313.5,692.5 V701 M1326.4,692.5 V701 M1316,696.8 H1324" stroke="#e4e4e4" stroke-width="1.4" stroke-linecap="butt"/><path d="M1314.4,696.8 L1317.6,694.8 V698.8 Z M1325.5,696.8 L1322.3,694.8 V698.8 Z" fill="#e4e4e4" stroke="none"/>
<path d="M1307.8,720 H1326.6000000000001 M1310.2,717.6 V736 M1313.95,717.7 V720 M1307.9,723.75 H1310.2 M1317.70,717.7 V720 M1307.9,727.50 H1310.2 M1321.45,717.7 V720 M1307.9,731.25 H1310.2 M1325.20,717.7 V720 M1307.9,735.00 H1310.2" stroke="#8f6cc0" stroke-width="1.3" stroke-linecap="butt"/>
<path d="M1315.4,725.6 V733.2 M1318.1,725.6 V733.2 M1320.8,725.6 V733.2 M1323.6,725.6 V733.2" stroke="#e4e4e4" stroke-width="1.4" stroke-linecap="butt"/><path d="M1312.3,732.5 L1326.9,726.5" stroke="#e4e4e4" stroke-width="1.2"/>
<rect x="8.7" y="793.1" width="2" height="2" fill="#fff"/><rect x="13.1" y="793.1" width="10.8" height="2" rx="0.6" fill="#fff"/>
<rect x="8.7" y="797.9" width="2" height="2" fill="#fff"/><rect x="13.1" y="797.9" width="10.8" height="2" rx="0.6" fill="#fff"/>
<rect x="8.7" y="802.6" width="2" height="2" fill="#fff"/><rect x="13.1" y="802.6" width="10.8" height="2" rx="0.6" fill="#fff"/>
<rect x="41.1" y="790.6" width="15.4" height="15.3" rx="1" stroke="#5a5a5a" stroke-width="1.3"/><path d="M41.1,792.8 H56.5" stroke="#5a5a5a" stroke-width="1"/>
<rect x="73.2" y="790.6" width="15.4" height="15.3" rx="1" stroke="#e4e4e4" stroke-width="1.3"/><path d="M73.2,792.8 H88.6" stroke="#e4e4e4" stroke-width="1"/><path d="M80.3,791 V805.6 M81.6,791 V805.6" stroke="#e4e4e4" stroke-width="0.9"/>
<rect x="105.3" y="790.6" width="15.3" height="15.3" rx="1" stroke="#e4e4e4" stroke-width="1.3"/><path d="M105.3,792.8 H120.6" stroke="#e4e4e4" stroke-width="1"/><path d="M105.6,798.4 H120.3 M105.6,800.1 H120.3" stroke="#e4e4e4" stroke-width="0.9"/>
<path d="M131.5,790.8 V807.4" stroke="#6a6a6a" stroke-width="1.2" stroke-linecap="butt"/>
<path d="M151.6,790.8 H143.6 V806.6 H155.8 V795 Z M151.6,791 V795 H155.6" stroke="#e4e4e4" stroke-width="1.3"/>
<path d="M145.6,800.2 H153 M149.3,796.4 V804" stroke="#e4e4e4" stroke-width="1.1"/><path d="M144.6,800.2 L146.6,798.6 V801.8 Z M154,800.2 L152,798.6 V801.8 Z M149.3,795.4 L147.7,797.4 H150.9 Z M149.3,805 L147.7,803 H150.9 Z" fill="#e4e4e4" stroke="none"/>
<path d="M175.6,790.4 V793.5 H188.7 V790.4" stroke="#e4e4e4" stroke-width="1.3"/><path d="M175.6,807 V796.9 H184.6 L188.7,801 V807 M184.6,797 V801 H188.5" stroke="#e4e4e4" stroke-width="1.3"/>
<path d="M178,804.6 H186.4" stroke="#e4e4e4" stroke-width="1.1"/><path d="M176.6,804.6 L178.8,803 V806.2 Z M187.8,804.6 L185.6,803 V806.2 Z" fill="#e4e4e4" stroke="none"/>
<path d="M359.4,799.6 L357.2,796.6 C356.4,795.4 354.6,796.4 355.4,797.8 L358.6,803.6 C359.8,806 361.4,807.2 364,807.2 C367,807.2 368.6,805.4 369,802.6 L370,796.6 C370.2,795 368.2,794.6 367.9,796.2 L367.4,798.4 M359.4,799.6 L358.8,793.4 C358.7,791.8 360.8,791.6 361,793.2 L361.7,797.6 M361,793.2 L361.2,792 C361.3,790.4 363.5,790.4 363.5,792 L363.8,797.4 M363.5,792.4 C363.9,790.9 366,791.2 365.9,792.8 L365.7,797.8 M365.9,793.6 C366.4,792.4 368.3,792.8 368.1,794.4 L367.9,796.2" stroke="#e4e4e4" stroke-width="1.2"/>
<path d="M390.2,791.6 V805.4 L393.2,803 L395.1,806.8 L396.7,806 L395,802.4 L399.6,801.6 Z" stroke="#e4e4e4" stroke-width="1.2"/>
<path d="M422.5,791 V806.6 M419.3,790.8 H425.7 M419.3,806.8 H425.7" stroke="#e4e4e4" stroke-width="1.3"/>
<circle cx="456.8" cy="796.5" r="5.9" stroke="#e4e4e4" stroke-width="1.4"/><path d="M461,800.9 L467.4,807" stroke="#e4e4e4" stroke-width="1.5"/><path d="M454.6,795 H459 M456.8,792.9 V797.1 M454.6,799 H459" stroke="#e4e4e4" stroke-width="1.1" stroke-linecap="butt"/>
<path d="M487,794.2 V803.3" stroke="#5e5e5e" stroke-width="1.3"/><path d="M489.5,798.7 L494.5,794.5 V802.9 Z" stroke="#5e5e5e" stroke-width="1.1"/>
<path d="M520.7,798.7 L526.1,794.5 V802.9 Z" stroke="#5e5e5e" stroke-width="1.1"/>
<rect x="541.6" y="791" width="226.6" height="16.4" rx="2" stroke="#8a8a8a" stroke-width="1.3"/>
<path d="M788.7,798.7 L783,794.5 V802.9 Z" stroke="#5e5e5e" stroke-width="1.1"/>
<path d="M819.8,798.7 L814.3,794.5 V802.9 Z" stroke="#5e5e5e" stroke-width="1.1"/><path d="M822.3,794.2 V803.3" stroke="#5e5e5e" stroke-width="1.3"/>
<path d="M835.8,791.3 V807.2" stroke="#6a6a6a" stroke-width="1.2" stroke-linecap="butt"/>
<circle cx="853.6" cy="799" r="8" stroke="#e4e4e4" stroke-width="1.4"/><path d="M849.8,799 L855.5,795 V803 Z" stroke="#e4e4e4" stroke-width="1.2"/>
<circle cx="886.2" cy="799" r="8" stroke="#585858" stroke-width="1.2"/><path d="M890.2,799 L884.6,795 V803 Z" stroke="#585858" stroke-width="1.1"/>
<path d="M816.2,823.2 V839 M820.9,823.2 V839 M825.7,823.2 V839 M813.2,827 H828.8 M813.2,831.5 H828.8 M813.2,836 H828.8" stroke="#fff" stroke-width="1.25" stroke-linecap="butt"/>
<path d="M848.4,823.2 V839 M853.4,823.2 V829 M858.3,823.2 V829 M845,826.9 H860.8 M845,831.5 H851.6 M845,836 H851.2" stroke="#fff" stroke-width="1.15" stroke-linecap="butt"/>
<path d="M853.6999999999999,832.3000000000001 H857.3 A3.3,3.3 0 0 1 857.3,838.9 H853.6999999999999" stroke="#fff" stroke-width="2.8" stroke-linecap="butt"/>
<path d="M855.0999999999999,832.3000000000001 H857.3 A3.3,3.3 0 0 1 857.3,838.9 H855.0999999999999" stroke="#18588a" stroke-width="0.9" stroke-linecap="butt"/>
<path d="M888,823.9 H879.3 V839.6 H883.6 M888,824 L892.3,828.4 V830 M888,824.2 V828.4 H892" stroke="#fff" stroke-width="1.3"/>
<path d="M886.4,832.3000000000001 H890 A3.3,3.3 0 0 1 890,838.9 H886.4" stroke="#fff" stroke-width="2.8" stroke-linecap="butt"/>
<path d="M887.8,832.3000000000001 H890 A3.3,3.3 0 0 1 890,838.9 H887.8" stroke="#18588a" stroke-width="0.9" stroke-linecap="butt"/>
<path d="M910.6,838.6 L912.4,833.6 L921.6,823.9 L925.6,827.8 L924.6,828.9 M912.4,833.6 L915.6,836.8 L910.6,838.6" stroke="#fff" stroke-width="1.3"/>
<path d="M919.1999999999999,832.3000000000001 H922.8 A3.3,3.3 0 0 1 922.8,838.9 H919.1999999999999" stroke="#fff" stroke-width="2.8" stroke-linecap="butt"/>
<path d="M920.5999999999999,832.3000000000001 H922.8 A3.3,3.3 0 0 1 922.8,838.9 H920.5999999999999" stroke="#18588a" stroke-width="0.9" stroke-linecap="butt"/>
<path d="M942.6,838.6 L944.4,833.6 L953.8,823.2 L957.8,827 L956.6,828.4 M944.4,833.6 L947.6,836.8 L942.6,838.6" stroke="#e4e4e4" stroke-width="1.3"/>
<path d="M957.4,832.4 A4,4 0 1 1 952,832.6" stroke="#2a86d8" stroke-width="1.5"/><path d="M955.6,830 L959.4,831.4 L957,834.4 Z" fill="#2a86d8" stroke="none"/>
<rect x="974.3" y="823.5" width="16.9" height="16.5" rx="0.8" stroke="#e4e4e4" stroke-width="1.3"/><path d="M974.3,825.6 H991.2" stroke="#e4e4e4" stroke-width="1"/>
<path d="M978.2,830 H988 M985.4,827.6 L988.2,830 L985.4,832.4 M987.4,834.9 H977.6 M980.2,832.5 L977.4,834.9 L980.2,837.3" stroke="#e4e4e4" stroke-width="1.2"/>
<path d="M1001.4,830 L1005.3,833.8 L1009.3,830" stroke="#e4e4e4" stroke-width="1.5"/>
</svg>

<!-- text labels -->
<span class="t" style="left:16.80px;top:-0.40px;font-size:13px;line-height:17px;letter-spacing:-0.990px;color:#f2f2f2">Revu</span>
<span class="t" style="left:69.80px;top:-0.40px;font-size:13px;line-height:17px;letter-spacing:-0.488px;color:#f2f2f2">File</span>
<span class="t" style="left:116.00px;top:-0.40px;font-size:13px;line-height:17px;letter-spacing:-0.602px;color:#f2f2f2">Edit</span>
<span class="t" style="left:162.50px;top:-0.40px;font-size:13px;line-height:17px;letter-spacing:-0.238px;color:#f2f2f2">View</span>
<span class="t" style="left:214.20px;top:-0.40px;font-size:13px;line-height:17px;letter-spacing:-0.431px;color:#f2f2f2">Document</span>
<span class="t" style="left:295.30px;top:-0.40px;font-size:13px;line-height:17px;letter-spacing:-0.430px;color:#f2f2f2">Batch</span>
<span class="t" style="left:352.00px;top:-0.40px;font-size:13px;line-height:17px;letter-spacing:-0.152px;color:#f2f2f2">Tools</span>
<span class="t" style="left:406.70px;top:-0.40px;font-size:13px;line-height:17px;letter-spacing:-0.492px;color:#f2f2f2">Window</span>
<span class="t" style="left:476.50px;top:-0.40px;font-size:13px;line-height:17px;letter-spacing:-0.513px;color:#f2f2f2">Help</span>
<span class="t" style="left:1052.30px;top:0.78px;font-size:11.6px;line-height:15px;letter-spacing:-0.540px;color:#ffffff;font-weight:700">taimoor@brightergraphics.com</span>
<span class="t" style="left:57.10px;top:26.64px;font-size:12px;line-height:16px;letter-spacing:-0.778px;color:#f2f2f2;font-weight:700">Name:</span>
<span class="t" style="left:92.90px;top:26.64px;font-size:12px;line-height:16px;letter-spacing:-0.598px;color:#f2f2f2">Brighter Graphics - Floor Plan 1</span>
<span class="t" style="left:253.00px;top:26.64px;font-size:12px;line-height:16px;letter-spacing:-0.810px;color:#f2f2f2;font-weight:700">Pages:</span>
<span class="t" style="left:291.00px;top:26.64px;font-size:12px;line-height:16px;letter-spacing:0.000px;color:#f2f2f2">1</span>
<span class="t" style="left:40.50px;top:60.64px;font-size:12px;line-height:16px;letter-spacing:-0.546px;color:#f2f2f2">Brighter Graphics - Floor Plan 1*</span>
<span class="t" style="left:68.90px;top:98.74px;font-size:12px;line-height:16px;letter-spacing:-0.653px;color:#f2f2f2;font-weight:700">Define:</span>
<span class="t" style="left:348.00px;top:98.74px;font-size:12px;line-height:16px;letter-spacing:-0.580px;color:#f2f2f2;font-weight:700">Create:</span>
<span class="t" style="left:716.70px;top:98.54px;font-size:12px;line-height:16px;letter-spacing:-0.586px;color:#f2f2f2">Apply</span>
<span class="t" style="left:766.50px;top:98.54px;font-size:12px;line-height:16px;letter-spacing:-0.637px;color:#f2f2f2">Close</span>
<span class="t" style="left:610.90px;top:790.64px;font-size:12px;line-height:16px;letter-spacing:-0.518px;color:#f2f2f2">Floor Plan (1 of 1)</span>
<span class="t" style="left:1079.70px;top:789.70px;font-size:13px;line-height:17px;letter-spacing:-0.451px;color:#f2f2f2">106.68 x 76.20 cm</span>
<span class="t" style="left:1198.10px;top:789.70px;font-size:13px;line-height:17px;letter-spacing:-0.459px;color:#f2f2f2">9.525 cm = 30'-0&quot;</span>
<span class="t" style="left:0.50px;top:823.24px;font-size:12px;line-height:16px;letter-spacing:-0.938px;color:#f2f2f2">Ready</span>
<span class="t" style="left:1031.50px;top:823.24px;font-size:12px;line-height:16px;letter-spacing:-0.565px;color:#f2f2f2">9.525 cm = 30'-0&quot;</span>
<span class="t" style="left:1136.50px;top:823.24px;font-size:12px;line-height:16px;letter-spacing:-0.537px;color:#f2f2f2">106.68 x 76.20 cm</span>
<span class="t" style="left:1256.60px;top:823.24px;font-size:12px;line-height:16px;letter-spacing:-0.473px;color:#f2f2f2">(22.30, 46.43)</span>
<span class="t" style="left:1317.20px;top:69.26px;font-size:10.5px;line-height:14px;letter-spacing:0.000px;color:#f0f0f0">A</span>
<span class="t" style="left:425.30px;top:793.21px;font-size:9.2px;line-height:12px;letter-spacing:0.000px;color:#f0f0f0;font-weight:700">A</span>
</div>
</body>
</html>
